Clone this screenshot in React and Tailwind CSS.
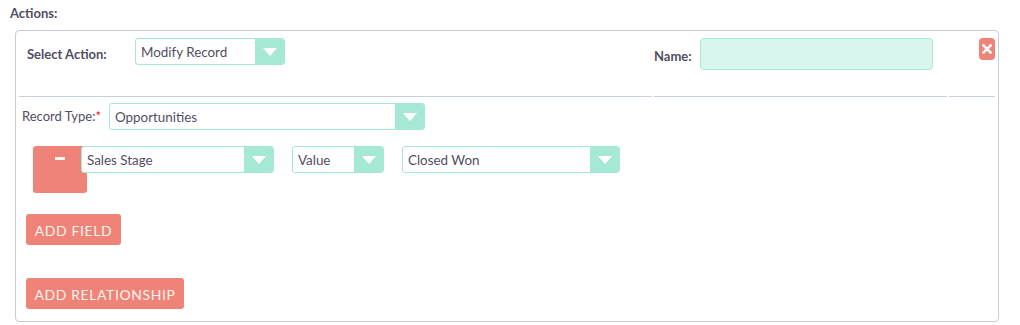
import React from 'react';

const Caret = () => (
    <svg width="14" height="8" viewBox="0 0 14 8" className="block">
        <path d="M0 0 L14 0 L7 8 Z" fill="#ffffff" />
    </svg>
);

const Select = ({ value, width, className = '' }) => (
    <div
        className={`relative flex h-[27px] items-stretch rounded-[3px] border border-[#a5e8d6] bg-white ${className}`}
        style={{ width }}
    >
        <div className="flex flex-1 items-center pl-[5px] pt-[2px] text-[13.4px] text-[#534d64]">{value}</div>
        <div className="flex w-[29px] items-center justify-center rounded-r-[2px] bg-[#a5e8d6]">
            <Caret />
        </div>
    </div>
);

const RedButton = ({ children, width }) => (
    <button
        className="flex h-[31px] items-center justify-center rounded-[3px] bg-[#f08377] pt-[1px] text-[14px] tracking-[0.6px] text-[#f8f4f0]"
        style={{ width }}
    >
        {children}
    </button>
);

export default function App() {
    return (
        <div className="h-[325px] w-[1020px] bg-white font-['Lato','Noto_Sans',sans-serif] text-[#534d64]">
            <div className="pl-[10px] pt-[5px] text-[13px] font-bold leading-[16px]">Actions:</div>

            <div className="mx-[15px] mt-[9px] h-[292px] w-[984px] rounded-[4px] border border-[#c5ced6]">
                {/* select action / name row */}
                <div className="flex h-[65px] pl-[11px] pt-[7px]">
                    <div className="w-[108px] pt-[7px] text-[13px] font-bold">Select Action:</div>
                    <Select value="Modify Record" width={150} />
                    <div className="ml-[369px] w-[46px] pt-[9px] text-[13px] font-bold">Name:</div>
                    <div className="h-[32px] w-[233px] rounded-[4px] border border-[#a5e8d6] bg-[#d8f5ee]" />
                    <div className="ml-[46px] flex h-[22px] w-[16px] items-center justify-center rounded-[4px] bg-[#f08377]">
                        <svg width="10" height="10" viewBox="0 0 10 10">
                            <path d="M1.5 1.5 L8.5 8.5 M8.5 1.5 L1.5 8.5" stroke="#ffffff" strokeWidth="2.6" strokeLinecap="square" />
                        </svg>
                    </div>
                </div>

                {/* separator */}
                <div className="flex gap-[2px] px-[3px]">
                    <div className="h-px w-[633px] bg-[#c5d0db]" />
                    <div className="h-px w-[293px] bg-[#c5d0db]" />
                    <div className="h-px flex-1 bg-[#c5d0db]" />
                </div>

                {/* record type */}
                <div className="flex items-center pl-[6px] pt-[6px]">
                    <div className="w-[87px] text-[13px]">
                        Record Type:<span className="text-[#e02020]">*</span>
                    </div>
                    <Select value="Opportunities" width={316} />
                </div>

                {/* field row */}
                <div className="flex items-start pl-[17px] pt-[16px]">
                    <div className="flex h-[47px] w-[54px] justify-center rounded-[3px] bg-[#f08377] pt-[11px]">
                        <div className="h-[3px] w-[10px] bg-[#f8f4f0]" />
                    </div>
                    <Select value="Sales Stage" width={193} className="-ml-[6px]" />
                    <Select value="Value" width={92} className="ml-[18px]" />
                    <Select value="Closed Won" width={218} className="ml-[18px]" />
                </div>

                <div className="pl-[10px] pt-[21px]">
                    <RedButton width={95}>ADD FIELD</RedButton>
                </div>
                <div className="pl-[10px] pt-[33px]">
                    <RedButton width={158}>ADD RELATIONSHIP</RedButton>
                </div>
            </div>
        </div>
    );
}
